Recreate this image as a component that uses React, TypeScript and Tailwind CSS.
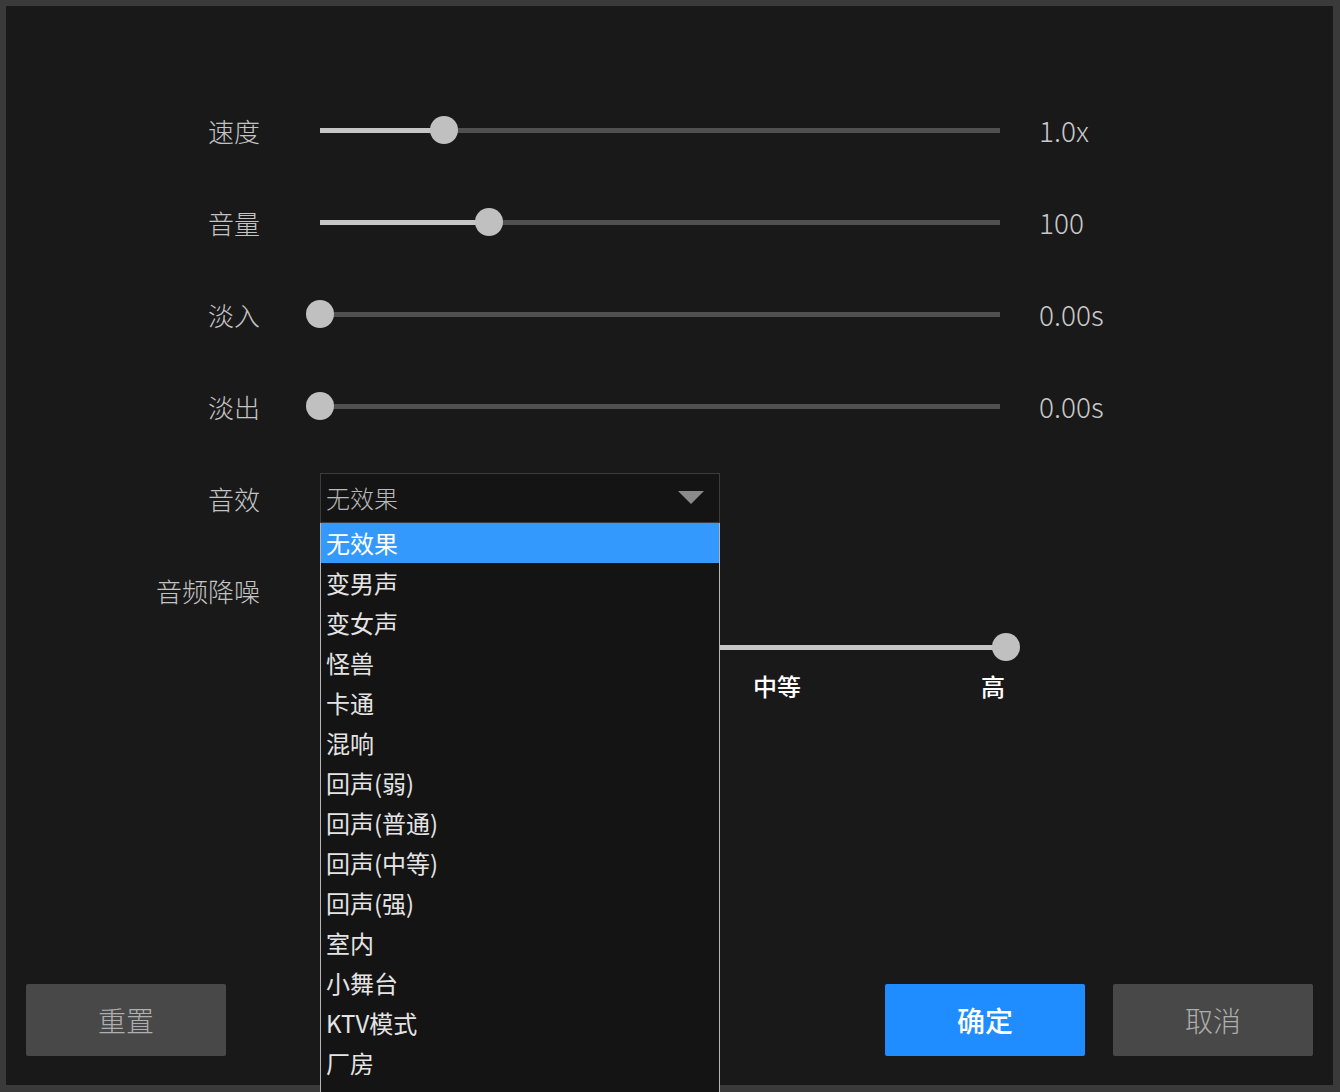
import React, { useState } from 'react';

const FONT = { fontFamily: '"Noto Sans CJK SC", "Noto Sans", sans-serif' };

const EFFECTS = [
  '无效果', '变男声', '变女声', '怪兽', '卡通', '混响',
  '回声(弱)', '回声(普通)', '回声(中等)', '回声(强)',
  '室内', '小舞台', 'KTV模式', '厂房',
];

// stop labels shown under the noise slider (offset from the track start)
const NOISE_LABELS = [
  { text: '中等', left: 457 },
  { text: '高', left: 673 },
];

type SliderProps = { percent: number };

// Plain horizontal slider: light fill up to the thumb, dark rest
function Slider({ percent }: SliderProps) {
  return (
    <div className="relative w-[680px] h-7 flex items-center">
      <div className="w-full h-[5px] bg-[#505050]" />
      <div className="absolute left-0 h-[5px] bg-[#c6c6c6]" style={{ width: `${percent}%` }} />
      <div
        className="absolute w-7 h-7 -ml-[14px] rounded-full bg-[#c0c0c0]"
        style={{ left: `${percent}%` }}
      />
    </div>
  );
}

function Row({ label, children }: { label: string; children: React.ReactNode }) {
  return (
    <div className="flex items-center h-[92px]">
      <div className="w-[254px] text-right text-[26px] font-light text-[#c4c4c4]">{label}</div>
      <div className="ml-[60px] flex items-center">{children}</div>
    </div>
  );
}

function Value({ text }: { text: string }) {
  return <span className="ml-[39px] text-[28px] font-light text-[#c8c8c8] leading-none">{text}</span>;
}

export default function App() {
  const [effect, setEffect] = useState(0);

  return (
    <div className="w-[1340px] h-[1092px] bg-[#3a3a3a] pt-[6px] pl-[6px] pr-[7px] pb-[7px] overflow-hidden" style={FONT}>
      <div className="relative h-full bg-[#1a191a] flex flex-col pt-[78px] pb-[29px] px-5">
        <div className="-ml-5">
          <Row label="速度">
            <Slider percent={18.2} />
            <Value text="1.0x" />
          </Row>
          <Row label="音量">
            <Slider percent={24.9} />
            <Value text="100" />
          </Row>
          <Row label="淡入">
            <Slider percent={0} />
            <Value text="0.00s" />
          </Row>
          <Row label="淡出">
            <Slider percent={0} />
            <Value text="0.00s" />
          </Row>

          <Row label="音效">
            <div className="relative z-10">
              <div className="w-[400px] h-[50px] border border-[#3c3c3c] bg-[#151415] flex items-center justify-between pl-[5px] pr-[15px]">
                <span className="text-[24px] font-light text-[#b8b8b8]">{EFFECTS[effect]}</span>
                <svg width="26" height="14" viewBox="0 0 26 14">
                  <polygon points="0,0 26,0 13,13" fill="#8a8a8a" />
                </svg>
              </div>
              <ul className="absolute top-full left-0 w-[400px] h-[600px] bg-[#151415] border-x border-[#b4b4b4]">
                {EFFECTS.map((name, i) => (
                  <li
                    key={name}
                    onClick={() => setEffect(i)}
                    className={`h-10 flex items-center px-[5px] text-[24px] ${
                      i === effect ? 'bg-[#3399fd] text-white' : 'text-[#e4e4e4]'
                    }`}
                  >
                    {name}
                  </li>
                ))}
              </ul>
            </div>
          </Row>

          <Row label="音频降噪">
            <div className="w-[400px] h-7" />
          </Row>

          {/* noise reduction level slider with stop labels */}
          <div className="ml-[314px] -mt-[3px] w-[686px]">
            <div className="relative h-7 flex items-center">
              <div className="w-full h-[5px] bg-[#c6c6c6]" />
              <div className="absolute right-0 mr-[-14px] w-7 h-7 rounded-full bg-[#c0c0c0]" />
            </div>
            <div className="relative h-10 mt-[13px]">
              {NOISE_LABELS.map((lvl) => (
                <span
                  key={lvl.text}
                  className="absolute -translate-x-1/2 text-[24px] font-medium text-white leading-none"
                  style={{ left: lvl.left }}
                >
                  {lvl.text}
                </span>
              ))}
            </div>
          </div>
        </div>

        <div className="mt-auto flex items-center">
          <button className="w-[200px] h-[72px] rounded-[2px] bg-[#484848] text-[28px] font-light text-[#aeaeae]">重置</button>
          <div className="flex-1" />
          <button className="w-[200px] h-[72px] rounded-[2px] bg-[#1f8cff] text-[28px] font-medium text-white">确定</button>
          <button className="ml-7 w-[200px] h-[72px] rounded-[2px] bg-[#484848] text-[28px] font-light text-[#aeaeae]">取消</button>
        </div>
      </div>
    </div>
  );
}
